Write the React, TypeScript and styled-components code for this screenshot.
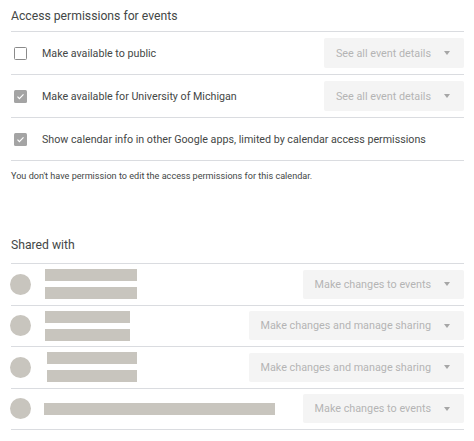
import React from 'react';
import styled, { createGlobalStyle } from 'styled-components';

const GlobalStyle = createGlobalStyle`
  body {
    margin: 0;
    background: #ffffff;
    font-family: Roboto, 'Liberation Sans', Arial, sans-serif;
    color: #444746;
  }
`;

const Page = styled.div`
  display: flex;
  flex-direction: column;
  padding: 0 10px 0 11px;
`;

const SectionTitle = styled.div<{ $top?: number; $height: number }>`
  display: flex;
  align-items: center;
  height: ${({ $height }) => $height}px;
  margin-top: ${({ $top }) => $top ?? 0}px;
  font-size: 12.2px;
  color: #444746;
  border-bottom: 1px solid #dadce0;
`;

const PermRow = styled.div`
  display: flex;
  align-items: center;
  height: 42px;
  border-bottom: 1px solid #dadce0;
`;

const CheckBox = styled.span<{ $checked?: boolean }>`
  display: flex;
  align-items: center;
  justify-content: center;
  box-sizing: border-box;
  width: 13px;
  height: 13px;
  margin: 0 15px 0 3px;
  border-radius: 1.5px;
  border: ${({ $checked }) => ($checked ? 'none' : '1.5px solid #8a8a8a')};
  background: ${({ $checked }) => ($checked ? '#a4a4a4' : '#ffffff')};
`;

const Label = styled.span`
  flex: 1;
  font-size: 10.7px;
  color: #444746;
  white-space: nowrap;
`;

const Select = styled.div<{ $height: number }>`
  display: flex;
  align-items: center;
  gap: 13px;
  height: ${({ $height }) => $height}px;
  padding: 0 14px 0 12px;
  margin-left: auto;
  background: #f4f4f4;
  border-radius: 2px;
  font-size: 10.8px;
  color: #b4b4b4;
  white-space: nowrap;
`;

const Caret = styled.span`
  width: 0;
  height: 0;
  border-left: 3.5px solid transparent;
  border-right: 3.5px solid transparent;
  border-top: 4px solid #a6a6a6;
`;

const Note = styled.div`
  padding-top: 9px;
  font-size: 9.1px;
  line-height: 12px;
  color: #444746;
`;

const ShareRow = styled.div`
  display: flex;
  align-items: center;
  height: 40.5px;
  border-bottom: 1px solid #dadce0;
`;

const Avatar = styled.span`
  width: 21px;
  height: 21px;
  border-radius: 50%;
  margin-left: -1px;
  background: #c8c5be;
  flex-shrink: 0;
`;

const NameBlock = styled.div<{ $offset: number }>`
  display: flex;
  flex-direction: column;
  gap: 6px;
  margin-left: ${({ $offset }) => $offset}px;
`;

const Bar = styled.span<{ $width: number }>`
  display: block;
  width: ${({ $width }) => $width}px;
  height: 12px;
  background: #c8c5be;
`;

const Check = () => (
  <svg width="9" height="9" viewBox="0 0 24 24">
    <path d="M4 12.5l5 5L20 6.5" fill="none" stroke="#ffffff" strokeWidth="3.2" />
  </svg>
);

const permissions = [
  { label: 'Make available to public', checked: false, select: 'See all event details' },
  { label: 'Make available for University of Michigan', checked: true, select: 'See all event details' },
  {
    label: 'Show calendar info in other Google apps, limited by calendar access permissions',
    checked: true,
  },
];

const shared = [
  { bars: [92, 92], offset: 14, role: 'Make changes to events' },
  { bars: [85, 85], offset: 14, role: 'Make changes and manage sharing' },
  { bars: [90, 90], offset: 16, role: 'Make changes and manage sharing' },
  { bars: [231], offset: 13, role: 'Make changes to events' },
];

const App = () => {
  return (
    <Page>
      <GlobalStyle />
      <SectionTitle $height={31}>Access permissions for events</SectionTitle>
      {permissions.map((p) => (
        <PermRow key={p.label}>
          <CheckBox $checked={p.checked}>{p.checked && <Check />}</CheckBox>
          <Label>{p.label}</Label>
          {p.select && (
            <Select $height={30}>
              {p.select}
              <Caret />
            </Select>
          )}
        </PermRow>
      ))}
      <Note>You don&apos;t have permission to edit the access permissions for this calendar.</Note>
      <SectionTitle $top={45} $height={36}>
        Shared with
      </SectionTitle>
      {shared.map((s, i) => (
        <ShareRow key={i}>
          <Avatar />
          <NameBlock $offset={s.offset}>
            {s.bars.map((w, j) => (
              <Bar key={j} $width={w} />
            ))}
          </NameBlock>
          <Select $height={29}>
            {s.role}
            <Caret />
          </Select>
        </ShareRow>
      ))}
    </Page>
  );
};

export default App;
